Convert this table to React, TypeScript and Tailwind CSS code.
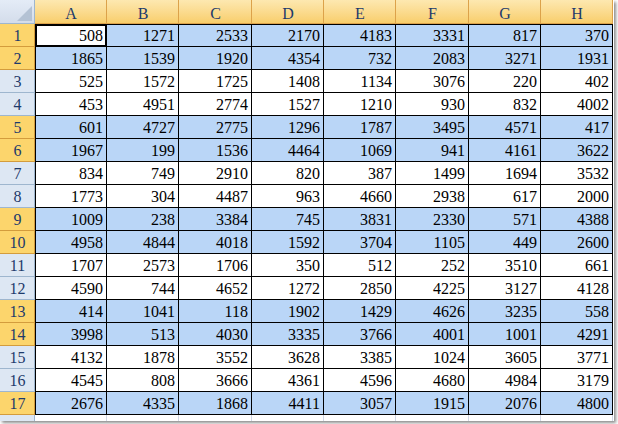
const columns = ["A", "B", "C", "D", "E", "F", "G", "H"];

const data: number[][] = [
  [508, 1271, 2533, 2170, 4183, 3331, 817, 370],
  [1865, 1539, 1920, 4354, 732, 2083, 3271, 1931],
  [525, 1572, 1725, 1408, 1134, 3076, 220, 402],
  [453, 4951, 2774, 1527, 1210, 930, 832, 4002],
  [601, 4727, 2775, 1296, 1787, 3495, 4571, 417],
  [1967, 199, 1536, 4464, 1069, 941, 4161, 3622],
  [834, 749, 2910, 820, 387, 1499, 1694, 3532],
  [1773, 304, 4487, 963, 4660, 2938, 617, 2000],
  [1009, 238, 3384, 745, 3831, 2330, 571, 4388],
  [4958, 4844, 4018, 1592, 3704, 1105, 449, 2600],
  [1707, 2573, 1706, 350, 512, 252, 3510, 661],
  [4590, 744, 4652, 1272, 2850, 4225, 3127, 4128],
  [414, 1041, 118, 1902, 1429, 4626, 3235, 558],
  [3998, 513, 4030, 3335, 3766, 4001, 1001, 4291],
  [4132, 1878, 3552, 3628, 3385, 1024, 3605, 3771],
  [4545, 808, 3666, 4361, 4596, 4680, 4984, 3179],
  [2676, 4335, 1868, 4411, 3057, 1915, 2076, 4800],
];

// rows picked out by the selection (1-based)
const selected = [1, 2, 5, 6, 9, 10, 13, 14, 17];

const gridCols =
  "grid grid-cols-[35px_72px_72px_73px_72px_72px_73px_72px_72px]";

// gridlines are drawn as inset shadows
const cellLine = (n: number, j: number) => {
  if (n === 1 && j === 0) return "shadow-[inset_0_0_0_2px_#000]";
  if (n === 1) return "shadow-[inset_0_1px_0_#000,inset_-1px_-1px_0_#000]";
  if (j === 0) return "shadow-[inset_1px_0_0_#000,inset_-1px_-1px_0_#000]";
  return "shadow-[inset_-1px_-1px_0_#000]";
};

export default function App() {
  return (
    <div className="w-[618px] h-[424px] bg-white font-['Liberation_Serif',serif] leading-none">
      <div className="w-[614px] h-[421px] overflow-hidden bg-white shadow-[2px_2px_3px_rgba(0,0,0,0.45)]">
        {/* column headers */}
        <div className={`${gridCols} grid-rows-[24px] h-[24px]`}>
          <div className="relative bg-gradient-to-b from-[#e4ecf7] to-[#d3dcea] shadow-[inset_-1px_-1px_0_#9eb6ce]">
            <svg className="absolute right-[3px] bottom-[3px]" width="15" height="15" viewBox="0 0 15 15">
              <polygon points="15,0 15,15 0,15" fill="#b4c2d4" />
            </svg>
          </div>
          {columns.map((c) => (
            <div
              key={c}
              className="flex items-center justify-center bg-gradient-to-b from-[#fde8b0] to-[#f8cd68] shadow-[inset_-1px_-1px_0_#dca24a] text-[16px] text-[#1d3a6b] pt-[3px]"
            >
              {c}
            </div>
          ))}
        </div>

        {data.map((row, i) => {
          const n = i + 1;
          const sel = selected.includes(n);
          return (
            <div key={n} className={`${gridCols} grid-rows-[23px] h-[23px]`}>
              <div
                className={`flex items-center justify-center text-[16px] text-[#1d3a6b] pt-[1px] ${
                  sel
                    ? "bg-[#fcd56c] shadow-[inset_-1px_-1px_0_#d39c3c]"
                    : "bg-[#dde7f3] shadow-[inset_-1px_-1px_0_#9eb6ce]"
                }`}
              >
                {n}
              </div>
              {row.map((v, j) => {
                const active = n === 1 && j === 0;
                return (
                  <div
                    key={j}
                    className={`flex items-center justify-end pr-[4px] pt-[1px] text-[16px] text-black ${cellLine(
                      n,
                      j
                    )} ${active ? "bg-white" : sel ? "bg-[#bad6f7]" : "bg-white"}`}
                  >
                    {v}
                  </div>
                );
              })}
            </div>
          );
        })}

        {/* partial next row */}
        <div className={`${gridCols} grid-rows-[23px] h-[23px]`}>
          <div className="bg-[#dde7f3] shadow-[inset_-1px_0_0_#9eb6ce]" />
          {columns.map((c) => (
            <div key={c} className="bg-white shadow-[inset_-1px_0_0_#d0d7e5]" />
          ))}
        </div>
      </div>
    </div>
  );
}
